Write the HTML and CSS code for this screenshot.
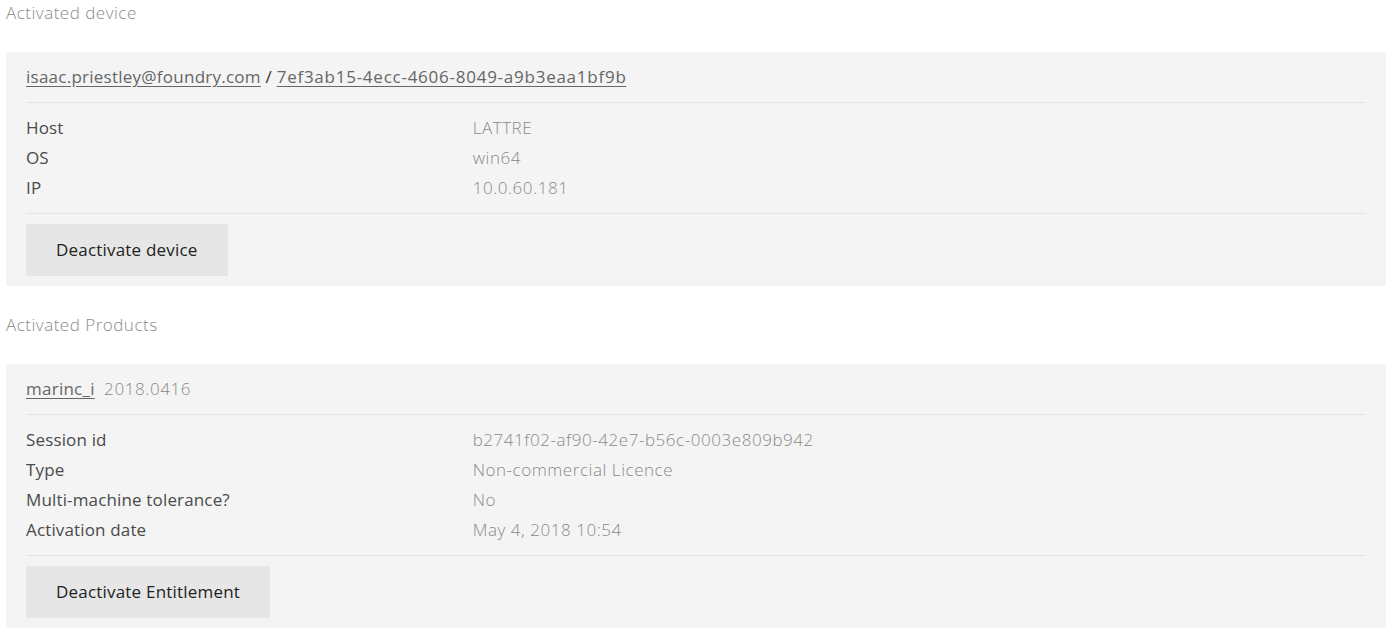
FILE: index.html
```html
<!DOCTYPE html>
<html>
<head>
<meta charset="utf-8">
<link rel="stylesheet" href="styles.css">
</head>
<body>
<div class="page">
  <h2 class="section-title">Activated device</h2>
  <div class="card">
    <div class="card-head">
      <a class="link" href="#">isaac.priestley@foundry.com</a> <span class="sep">/</span> <a class="link uuid" href="#">7ef3ab15-4ecc-4606-8049-a9b3eaa1bf9b</a>
    </div>
    <div class="rows">
      <div class="label">Host</div><div class="value">LATTRE</div>
      <div class="label">OS</div><div class="value">win64</div>
      <div class="label">IP</div><div class="value">10.0.60.181</div>
    </div>
    <div class="actions">
      <button class="btn">Deactivate device</button>
    </div>
  </div>

  <h2 class="section-title second">Activated Products</h2>
  <div class="card">
    <div class="card-head">
      <a class="link" href="#">marinc_i</a>&nbsp; <span class="version">2018.0416</span>
    </div>
    <div class="rows">
      <div class="label">Session id</div><div class="value">b2741f02-af90-42e7-b56c-0003e809b942</div>
      <div class="label">Type</div><div class="value">Non-commercial Licence</div>
      <div class="label">Multi-machine tolerance?</div><div class="value">No</div>
      <div class="label">Activation date</div><div class="value">May 4, 2018 10:54</div>
    </div>
    <div class="actions">
      <button class="btn">Deactivate Entitlement</button>
    </div>
  </div>
</div>
</body>
</html>
```
FILE: styles.css
```css
html, body {
  margin: 0;
  padding: 0;
  background: #ffffff;
}
body {
  font-family: "Open Sans", Lato, "Liberation Sans", sans-serif;
  font-size: 17px;
  letter-spacing: 0.25px;
  color: #333333;
}
.page {
  padding: 0 6px;
}
.section-title {
  margin: 0 0 26px 0;
  font-size: 17px;
  font-weight: 300;
  line-height: 26px;
  letter-spacing: 0.5px;
  color: #8c8c8c;
}
.section-title.second {
  margin-top: 26px;
}
.card {
  background: #f4f4f4;
  padding: 14px 20px 10px 20px;
}
.card-head {
  line-height: 22px;
  padding-bottom: 14px;
  border-bottom: 1px solid #e3e3e3;
  color: #555555;
}
.link {
  color: #666666;
  text-decoration: underline;
  text-underline-offset: 3px;
}
.uuid {
  letter-spacing: 0.75px;
}
.sep {
  color: #333333;
}
.version {
  color: #8a8a8a;
  font-weight: 300;
  letter-spacing: 0.6px;
}
.rows {
  display: grid;
  grid-template-columns: 1fr 2fr;
  padding: 10px 0;
  border-bottom: 1px solid #e3e3e3;
}
.label, .value {
  line-height: 30px;
}
.label {
  color: #4a4a4a;
  letter-spacing: 0.15px;
}
.value {
  color: #8a8a8a;
  font-weight: 300;
  letter-spacing: 0.55px;
}
.actions {
  padding-top: 10px;
}
.btn {
  font-family: inherit;
  font-size: 17px;
  letter-spacing: 0.2px;
  color: #222222;
  background: #e6e6e6;
  border: none;
  height: 52px;
  padding: 0 30px 1px 30px;
  cursor: pointer;
}
```
